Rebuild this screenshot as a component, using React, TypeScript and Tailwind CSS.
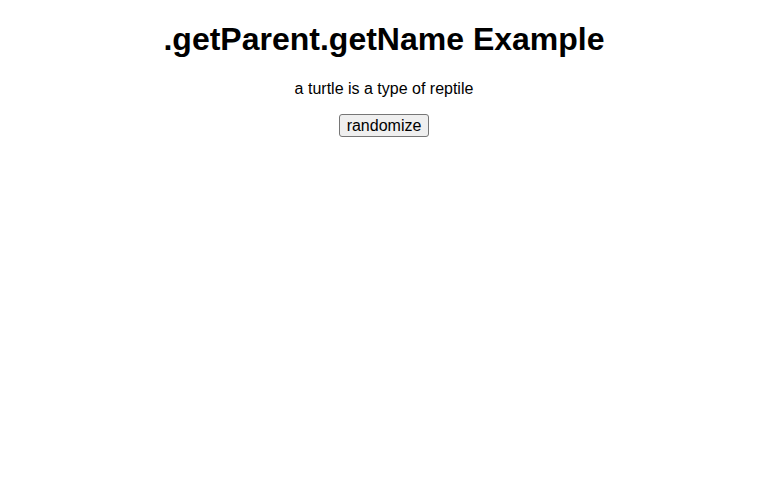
import React, { useState } from "react";

const animals: [string, string][] = [
  ["turtle", "reptile"],
  ["dog", "mammal"],
  ["eagle", "bird"],
  ["salmon", "fish"],
  ["frog", "amphibian"],
];

export default function App() {
  const [idx, setIdx] = useState(0);
  const [name, parent] = animals[idx];
  return (
    <div
      className="min-h-screen bg-white text-center text-black"
      style={{ fontFamily: '"Liberation Sans", Arial, sans-serif' }}
    >
      <div className="flow-root">
        <h1 className="my-[21.44px] text-[32px] font-bold leading-[37px]">
          .getParent.getName Example
        </h1>
        <p className="my-4 text-[16px] leading-[18px]">
          a {name} is a type of {parent}
        </p>
        <button
          className="rounded-[3px] border border-[#767676] bg-[#efefef] px-[7px] py-[1px] text-[16px] leading-[19px] text-black hover:bg-[#e5e5e5]"
          onClick={() => setIdx((idx + 1 + Math.floor(Math.random() * (animals.length - 1))) % animals.length)}
        >
          randomize
        </button>
      </div>
    </div>
  );
}
